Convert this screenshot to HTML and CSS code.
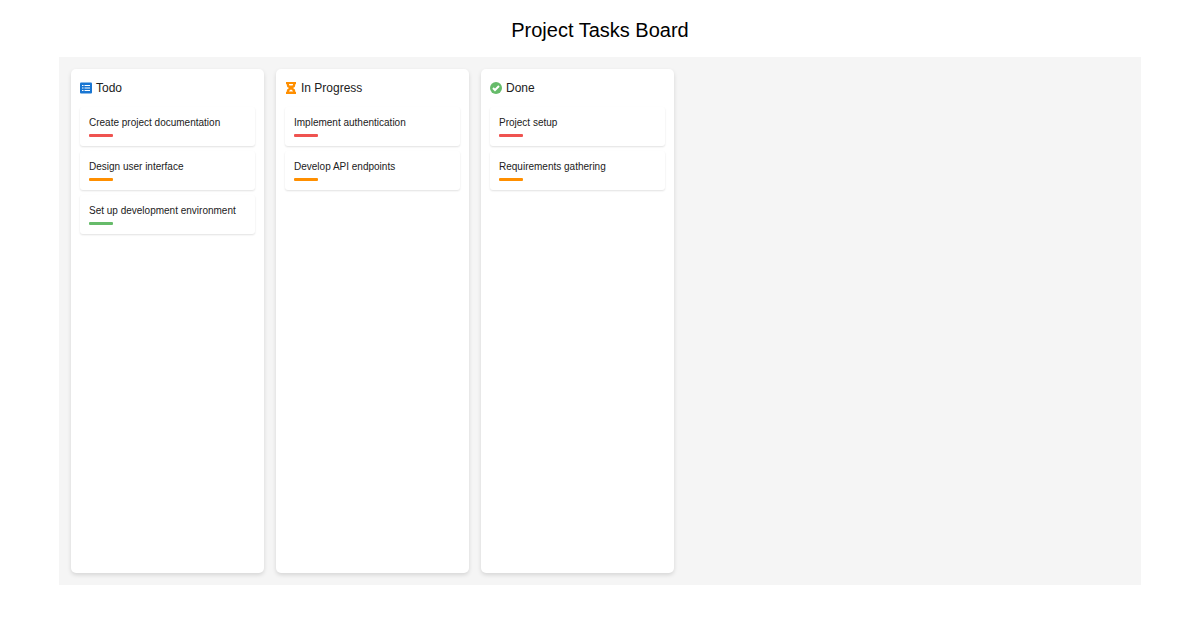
FILE: index.html
```html
<!DOCTYPE html>
<html lang="en">
<head>
    <meta charset="UTF-8">
    <meta name="viewport" content="width=device-width, initial-scale=1.0">
    <title>Project Tasks Board</title>
    <link rel="stylesheet" href="styles.css">
</head>
<body>
    <h1>Project Tasks Board</h1>
    <main class="board">
        <section class="column">
            <h2 class="column-header">
                <svg class="icon todo" viewBox="0 0 24 24" aria-hidden="true"><rect y="1" width="24" height="22" rx="2"/><path class="list" d="M4 7h3m2 0h11M4 12h3m2 0h11M4 17h3m2 0h11"/></svg>
                Todo
            </h2>
            <ul class="task-list">
                <li class="task">Create project documentation<span class="priority high"></span></li>
                <li class="task">Design user interface<span class="priority medium"></span></li>
                <li class="task">Set up development environment<span class="priority low"></span></li>
            </ul>
        </section>
        <section class="column">
            <h2 class="column-header">
                <svg class="icon progress" viewBox="0 0 24 24" aria-hidden="true"><path d="M2 0h20v4h-1q0 6-5 8 5 2 5 8h1v4H2v-4h1q0-6 5-8-5-2-5-8H2zm6 4q0 2 1 3h6q1-1 1-3zm4 11q-3 1-4 4h8q-1-3-4-4z" fill-rule="evenodd"/></svg>
                In Progress
            </h2>
            <ul class="task-list">
                <li class="task">Implement authentication<span class="priority high"></span></li>
                <li class="task">Develop API endpoints<span class="priority medium"></span></li>
            </ul>
        </section>
        <section class="column">
            <h2 class="column-header">
                <svg class="icon done" viewBox="0 0 24 24" aria-hidden="true"><circle cx="12" cy="12" r="12"/><path class="tick" d="M6 12l4 4 8-8"/></svg>
                Done
            </h2>
            <ul class="task-list">
                <li class="task">Project setup<span class="priority high"></span></li>
                <li class="task">Requirements gathering<span class="priority medium"></span></li>
            </ul>
        </section>
    </main>
</body>
</html>
```
FILE: styles.css
```css
* {
    box-sizing: border-box;
}
body {
    display: flex;
    flex-direction: column;
    min-height: 100vh;
    margin: 0;
    padding: 18px 59px 45px;
    font-family: "Liberation Sans", Arial, sans-serif;
    background-color: #fff;
    color: #000;
}
h1 {
    margin: 0 0 15px;
    font-size: 20px;
    font-weight: 400;
    line-height: 24px;
    text-align: center;
}
.board {
    display: flex;
    flex: 1;
    gap: 12px;
    padding: 12px;
    background-color: #f5f5f5;
}
.column {
    width: 193px;
    padding: 9px;
    background-color: #fff;
    border-radius: 5px;
    box-shadow: 0 2px 4px rgba(0, 0, 0, 0.13);
    color: #212121;
}
.column-header {
    display: flex;
    align-items: center;
    gap: 4px;
    margin: 0 0 9px;
    font-size: 12px;
    font-weight: 400;
    line-height: 20px;
}
.icon {
    width: 12px;
    height: 12px;
}
.todo { fill: #1976d2; }
.progress { fill: #ff8f00; }
.done { fill: #66bb6a; }
.list {
    stroke: #fff;
    stroke-width: 2;
}
.tick {
    fill: none;
    stroke: #fff;
    stroke-width: 4;
}

/* Tasks */
.task-list {
    display: flex;
    flex-direction: column;
    gap: 5px;
    margin: 0;
    padding: 0;
    list-style: none;
}
.task {
    padding: 9px;
    border-radius: 3px;
    box-shadow: 0 1px 2px rgba(0, 0, 0, 0.12);
    font-size: 10px;
    line-height: 14px;
}
.priority {
    display: block;
    width: 24px;
    height: 3px;
    margin-top: 4px;
    border-radius: 1px;
}
.high { background-color: #ef5350; }
.medium { background-color: #ff8f00; }
.low { background-color: #66bb6a; }
```
